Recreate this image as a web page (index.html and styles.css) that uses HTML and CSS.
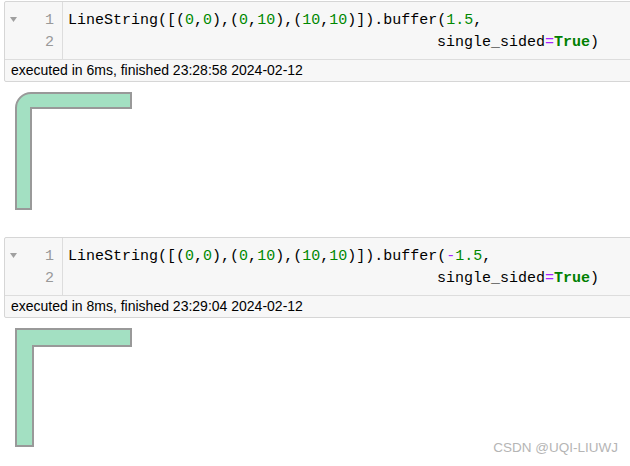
FILE: index.html
```html
<!DOCTYPE html>
<html>
<head>
<meta charset="utf-8">
<link rel="stylesheet" href="styles.css">
</head>
<body>
<div class="page">
  <div class="cell">
    <div class="input">
      <div class="gutter">
        <div class="gline"><svg class="fold" width="7" height="5" viewBox="0 0 7 5"><polygon points="0,0 7,0 3.5,5" fill="#a0a0a0"/></svg><span>1</span></div>
        <div class="gline"><span></span><span>2</span></div>
      </div>
      <div class="code"><div>LineString([(<span class="n">0</span>,<span class="n">0</span>),(<span class="n">0</span>,<span class="n">10</span>),(<span class="n">10</span>,<span class="n">10</span>)]).buffer(<span class="n">1.5</span>,</div><div>                                         single_sided<span class="o">=</span><span class="k">True</span>)</div></div>
    </div>
    <div class="out">executed in 6ms, finished 23:28:58 2024-02-12</div>
  </div>
  <div class="result">
    <svg width="140" height="154" viewBox="0 0 140 154">
      <path d="M31,127 L16,127 L16,26 A15,15 0 0 1 31,11 L131,11 L131,26 L31,26 Z" fill="#a3e0c2" stroke="#999999" stroke-width="2"/>
    </svg>
  </div>
  <div class="cell">
    <div class="input">
      <div class="gutter">
        <div class="gline"><svg class="fold" width="7" height="5" viewBox="0 0 7 5"><polygon points="0,0 7,0 3.5,5" fill="#a0a0a0"/></svg><span>1</span></div>
        <div class="gline"><span></span><span>2</span></div>
      </div>
      <div class="code"><div>LineString([(<span class="n">0</span>,<span class="n">0</span>),(<span class="n">0</span>,<span class="n">10</span>),(<span class="n">10</span>,<span class="n">10</span>)]).buffer(<span class="o">-</span><span class="n">1.5</span>,</div><div>                                         single_sided<span class="o">=</span><span class="k">True</span>)</div></div>
    </div>
    <div class="out">executed in 8ms, finished 23:29:04 2024-02-12</div>
  </div>
  <div class="result">
    <svg width="140" height="149" viewBox="0 0 140 149">
      <path d="M16,128 L16,11 L131,11 L131,28 L33,28 L33,128 Z" fill="#a3e0c2" stroke="#999999" stroke-width="2"/>
    </svg>
  </div>
  <div class="watermark">CSDN @UQI-LIUWJ</div>
</div>
</body>
</html>
```
FILE: styles.css
```css
html, body {
  margin: 0;
  padding: 0;
  background: #ffffff;
}
.page {
  position: relative;
  width: 630px;
  height: 466px;
  overflow: hidden;
  font-family: "Liberation Sans", Arial, sans-serif;
}
.cell {
  margin: 1px 0 0 4px;
  width: 640px;
  border: 1px solid #d6d6d6;
  border-radius: 2px;
  background: #f7f7f7;
}
.input {
  display: flex;
}
.gutter {
  width: 57px;
  border-right: 1px solid #dddddd;
  padding: 8px 0 5px 0;
  font-family: "Liberation Mono", monospace;
  font-size: 15px;
  line-height: 22px;
  color: #999999;
}
.gline {
  display: flex;
  justify-content: space-between;
  align-items: center;
  height: 22px;
  padding: 0 8px 0 5px;
}
.fold {
  display: block;
  margin-top: -4px;
}
.code {
  padding: 8px 0 5px 5px;
  font-family: "Liberation Mono", monospace;
  font-size: 15px;
  line-height: 22px;
  color: #000000;
  white-space: pre;
}
.code div {
  height: 22px;
}
.n { color: #008800; }
.o { color: #aa22ff; }
.k { color: #008000; font-weight: bold; }
.out {
  border-top: 1px solid #dddddd;
  height: 21px;
  line-height: 21px;
  padding-left: 6px;
  font-size: 14px;
  color: #000000;
}
.result {
  display: flex;
}
.result svg {
  display: block;
}
.watermark {
  position: absolute;
  right: 12px;
  top: 440px;
  font-size: 13.5px;
  color: #b5b5b5;
}
```
